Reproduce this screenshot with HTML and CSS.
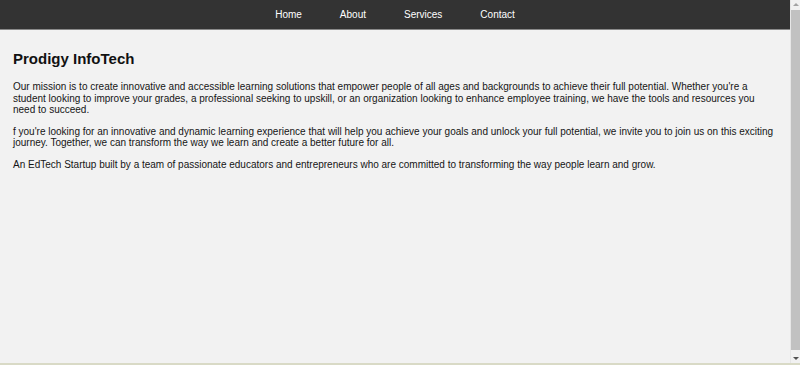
FILE: index.html
```html
<!DOCTYPE html>
<html lang="en">
<head>
<meta charset="utf-8">
<title>Prodigy InfoTech</title>
<link rel="stylesheet" href="styles.css">
</head>
<body>
<div class="window">
  <div class="page">
    <nav class="topnav">
      <a href="#" class="nav-link">Home</a>
      <a href="#" class="nav-link">About</a>
      <a href="#" class="nav-link">Services</a>
      <a href="#" class="nav-link">Contact</a>
    </nav>
    <main class="content">
      <h1 class="title">Prodigy InfoTech</h1>
      <p class="text">Our mission is to create innovative and accessible learning solutions that empower people of all ages and backgrounds to achieve their full potential. Whether you're a student looking to improve your grades, a professional seeking to upskill, or an organization looking to enhance employee training, we have the tools and resources you need to succeed.</p>
      <p class="text">f you're looking for an innovative and dynamic learning experience that will help you achieve your goals and unlock your full potential, we invite you to join us on this exciting journey. Together, we can transform the way we learn and create a better future for all.</p>
      <p class="text">An EdTech Startup built by a team of passionate educators and entrepreneurs who are committed to transforming the way people learn and grow.</p>
    </main>
  </div>
  <div class="scrollbar">
    <div class="sb-btn"><span class="arrow-up"></span></div>
    <div class="sb-track"><div class="sb-thumb"></div></div>
    <div class="sb-btn"><span class="arrow-down"></span></div>
  </div>
</div>
<div class="frame-line"></div>
</body>
</html>
```
FILE: styles.css
```css
html, body {
  margin: 0;
  height: 365px;
  overflow: hidden;
}
body {
  display: flex;
  flex-direction: column;
  font-family: "Liberation Sans", Arial, sans-serif;
  color: #151515;
  background: #f2f2f2;
}
.window {
  flex: 1;
  display: flex;
  min-height: 0;
}
.page {
  flex: 1;
  min-width: 0;
  background: #f2f2f2;
}
.topnav {
  display: flex;
  justify-content: center;
  align-items: center;
  height: 29px;
  background: #333333;
  border-bottom: 1px solid #8a8a8a;
}
.nav-link {
  color: #ffffff;
  text-decoration: none;
  font-size: 10px;
  padding: 0 19px;
}
.content {
  padding: 0 13px;
}
.title {
  font-size: 15px;
  line-height: 17px;
  font-weight: bold;
  margin: 19.5px 0 14.5px;
  color: #111;
}
.text {
  font-size: 10px;
  line-height: 11.5px;
  margin: 0 0 10px;
}
.scrollbar {
  width: 10px;
  display: flex;
  flex-direction: column;
  background: #f1f1f1;
  border-left: 1px solid #e6e6e6;
  box-sizing: border-box;
}
.sb-btn {
  height: 9px;
  display: flex;
  align-items: center;
  justify-content: center;
}
.arrow-up {
  width: 0;
  height: 0;
  border-left: 3px solid transparent;
  border-right: 3px solid transparent;
  border-bottom: 3px solid #a3a3a3;
}
.arrow-down {
  width: 0;
  height: 0;
  border-left: 3px solid transparent;
  border-right: 3px solid transparent;
  border-top: 3px solid #505050;
}
.sb-track {
  flex: 1;
  display: flex;
  padding: 1px 0 4px;
}
.sb-thumb {
  flex: 1;
  background: #c1c1c1;
}
.frame-line {
  height: 2px;
  background: #d9dac6;
}
```
